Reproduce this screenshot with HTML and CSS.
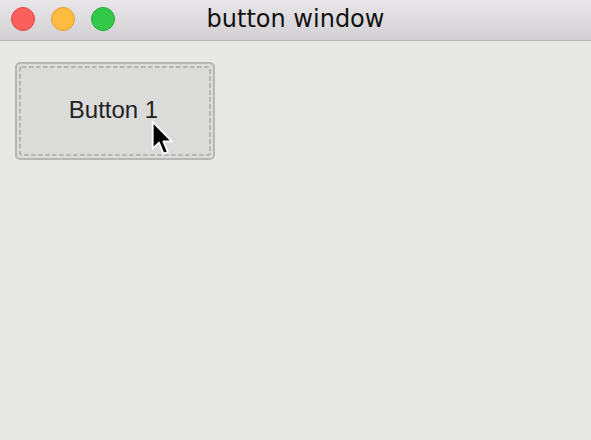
FILE: index.html
```html
<!DOCTYPE html>
<html>
<head>
<meta charset="utf-8">
<link rel="stylesheet" href="styles.css">
</head>
<body>
<div class="window">
  <div class="titlebar">
    <div class="lights">
      <span class="light red"></span>
      <span class="light yellow"></span>
      <span class="light green"></span>
    </div>
    <div class="title">button window</div>
  </div>
  <div class="content">
    <div class="button">
      <svg class="focus" width="196" height="94" viewBox="0 0 196 94">
        <rect x="3" y="3" width="190" height="88" rx="2" ry="2" fill="none" stroke="#a9a9a9" stroke-width="1.5" stroke-dasharray="4.5 2.5"/>
      </svg>
      <span class="label">Button 1</span>
      <svg class="cursor" width="25" height="39" viewBox="0 0 22 34">
        <path d="M1.5 1.5 L1.5 25 L7 19.7 L11 29.5 L14.8 28 L10.9 18.6 L18.3 18.6 Z" fill="#000" stroke="#fff" stroke-width="1.6" stroke-linejoin="round"/>
      </svg>
    </div>
  </div>
</div>
</body>
</html>
```
FILE: styles.css
```css
html, body {
  margin: 0;
  padding: 0;
  width: 591px;
  height: 440px;
  overflow: hidden;
  background: #e8e8e6;
}
.window {
  display: flex;
  flex-direction: column;
  width: 591px;
  height: 440px;
}
.titlebar {
  position: relative;
  height: 40px;
  border-bottom: 1px solid #b9b9b9;
  background: linear-gradient(#e8e6e8, #d2d0d2);
  display: flex;
  align-items: center;
}
.lights {
  display: flex;
  gap: 16px;
  padding-left: 11px;
  margin-top: -2px;
}
.light {
  display: block;
  width: 22px;
  height: 22px;
  border-radius: 50%;
  border: 1px solid;
}
.red { background: #fc605c; border-color: #df4744; }
.yellow { background: #fdbc40; border-color: #dea034; }
.green { background: #34c84a; border-color: #27aa35; }
.title {
  position: absolute;
  left: 0;
  right: 0;
  top: 3px;
  text-align: center;
  font-family: "DejaVu Sans", sans-serif;
  font-size: 24px;
  line-height: 32px;
  color: #111;
}
.content {
  padding: 21px 0 0 15px;
}
.button {
  position: relative;
  box-sizing: border-box;
  width: 200px;
  height: 98px;
  border: 2px solid #b6b6b6;
  border-radius: 5px;
  background: #dbdbd9;
  display: flex;
  align-items: center;
  justify-content: center;
}
.focus {
  position: absolute;
  left: 0;
  top: 0;
}
.label {
  font-family: "Liberation Sans", Arial, sans-serif;
  font-size: 24px;
  color: #222;
  margin-left: -3px;
  margin-top: -3px;
}
.cursor {
  position: absolute;
  left: 134px;
  top: 56px;
}
```
